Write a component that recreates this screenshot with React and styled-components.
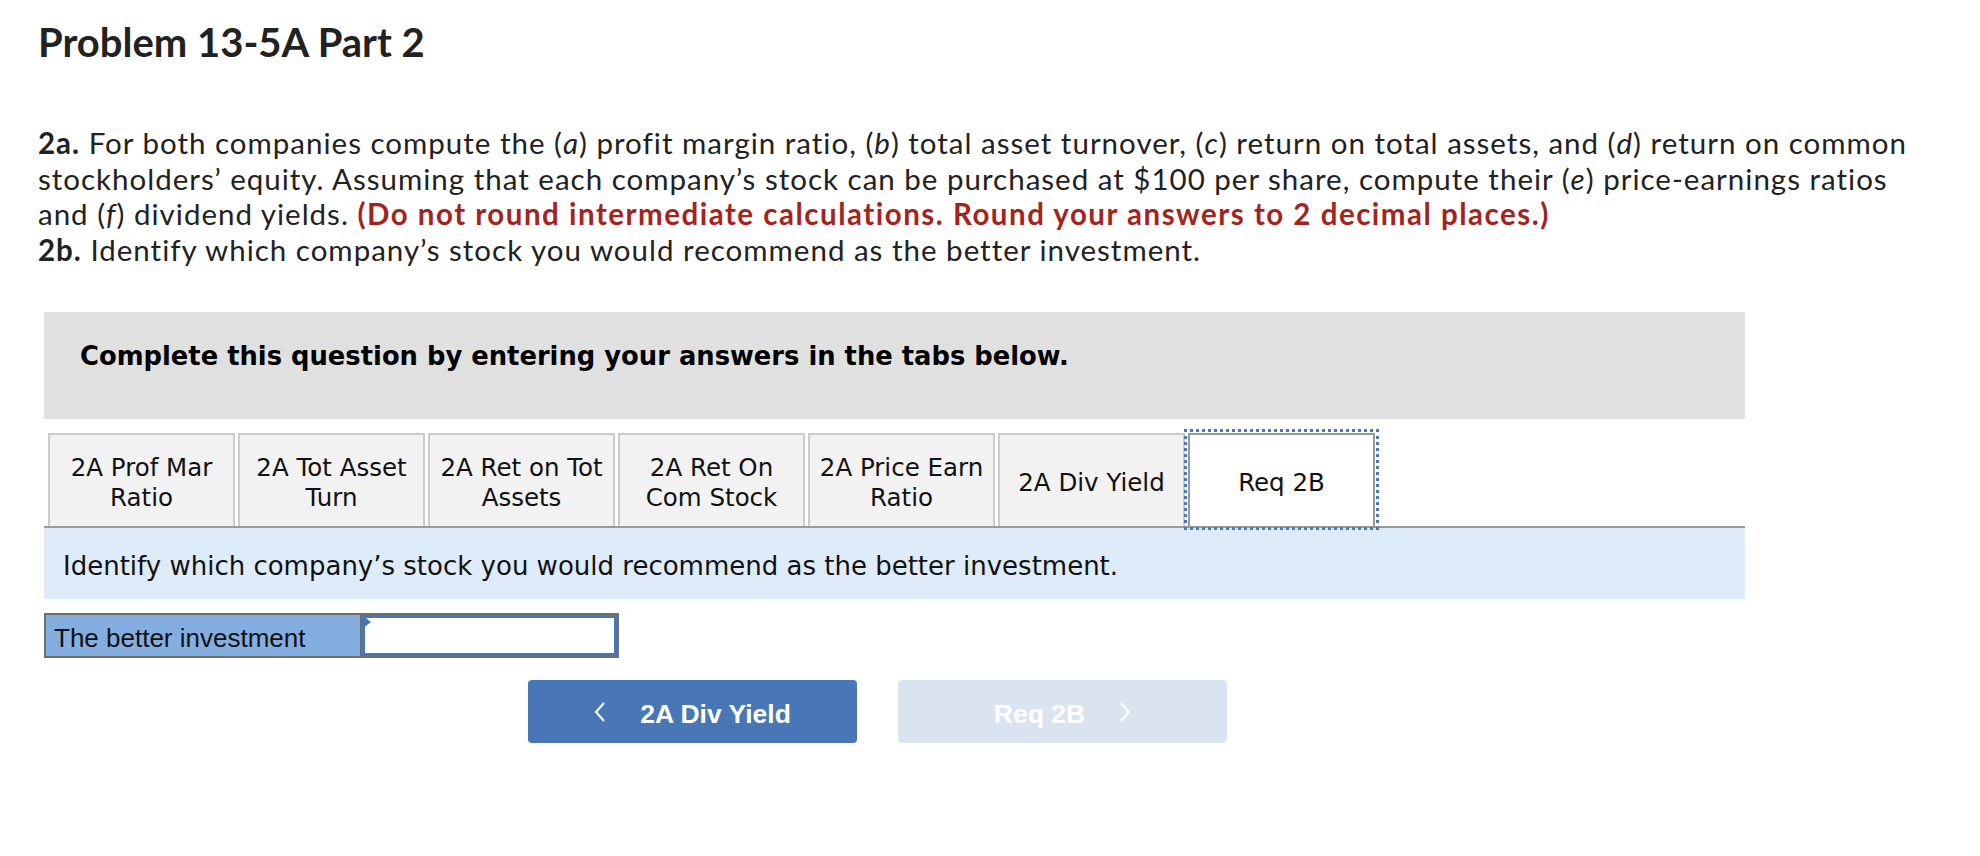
import React from 'react';
import styled, { createGlobalStyle } from 'styled-components';

const Global = createGlobalStyle`
  html, body { margin: 0; padding: 0; background: #fff; }
  body { font-family: Lato, "Noto Sans", sans-serif; color: #222; }
`;

const tabs = [
  ['2A Prof Mar', 'Ratio'],
  ['2A Tot Asset', 'Turn'],
  ['2A Ret on Tot', 'Assets'],
  ['2A Ret On', 'Com Stock'],
  ['2A Price Earn', 'Ratio'],
  ['2A Div Yield'],
  ['Req 2B'],
];

function App() {
  return (
    <Page>
      <Global />
      <Title>Problem 13-5A Part 2</Title>
      <Prompt>
        <b>2a.</b> For both companies compute the (<i>a</i>) profit margin ratio, (<i>b</i>) total asset turnover, (<i>c</i>) return on total assets, and (<i>d</i>) return on common
        <br />
        stockholders’ equity. Assuming that each company’s stock can be purchased at $100 per share, compute their (<i>e</i>) price-earnings ratios
        <br />
        and (<i>f</i>) dividend yields. <Warn>(Do not round intermediate calculations. Round your answers to 2 decimal places.)</Warn>
        <br />
        <b>2b.</b> Identify which company’s stock you would recommend as the better investment.
      </Prompt>

      <Question>
        <Banner>Complete this question by entering your answers in the tabs below.</Banner>
        <TabList>
          {tabs.map((t, i) => (
            <Tab key={i} active={i === tabs.length - 1}>
              {t.map((line, j) => (
                <span key={j}>{line}</span>
              ))}
            </Tab>
          ))}
        </TabList>
        <Instruction>Identify which company’s stock you would recommend as the better investment.</Instruction>

        <AnswerRow>
          <Label>The better investment</Label>
          <Cell>
            <Select />
          </Cell>
        </AnswerRow>

        <Nav>
          <NavButton>
            <Chevron viewBox="0 0 12 22">
              <polyline points="10,2 2,11 10,20" />
            </Chevron>
            2A Div Yield
          </NavButton>
          <NavButton disabled>
            Req 2B
            <Chevron viewBox="0 0 12 22">
              <polyline points="2,2 10,11 2,20" />
            </Chevron>
          </NavButton>
        </Nav>
      </Question>
    </Page>
  );
}

export default App;

const Page = styled.div`
  padding: 18px 0 60px 0;
`;

const Title = styled.h1`
  margin: 0 0 0 38px;
  font: 700 40px/48px Lato, "Noto Sans", sans-serif;
  color: #222;
`;

const Prompt = styled.p`
  margin: 59px 0 0 38px;
  font: 400 29.5px/35.5px Lato, "Noto Sans", sans-serif;
  letter-spacing: 1px;
  color: #222;
  white-space: nowrap;
  b { font-weight: 700; }
`;

const Warn = styled.span`
  color: #a5231d;
  font-weight: 700;
  letter-spacing: 1.5px;
`;

const Question = styled.section`
  margin: 45px 0 0 44px;
  width: 1701px;
  font-family: "DejaVu Sans", Verdana, sans-serif;
`;

const Banner = styled.div`
  box-sizing: border-box;
  height: 107px;
  padding: 29px 36px 0;
  background: #e0e0e0;
  font-weight: 700;
  font-size: 25.8px;
  line-height: 30px;
  color: #000;
`;

const TabList = styled.div`
  display: flex;
  gap: 3px;
  margin-top: 14px;
  padding-left: 4px;
  border-bottom: 2px solid #9a9a9a;
`;

const Tab = styled.div`
  box-sizing: border-box;
  width: 187px;
  height: 93px;
  padding-top: 4px;
  display: flex;
  flex-direction: column;
  align-items: center;
  justify-content: center;
  border: 2px solid ${p => (p.active ? '#999' : '#cbcbcb')};
  border-bottom: none;
  background: ${p => (p.active ? '#fff' : '#f2f2f2')};
  outline: ${p => (p.active ? '3px dotted #4a78bf' : 'none')};
  outline-offset: 1px;
  font-size: 24.5px;
  line-height: 30px;
  color: #111;
  text-align: center;
  white-space: nowrap;
`;

const Instruction = styled.div`
  box-sizing: border-box;
  height: 71px;
  padding: 5px 0 0 19px;
  display: flex;
  align-items: center;
  background: #deebf8;
  font-size: 26px;
  color: #111;
`;

const AnswerRow = styled.div`
  display: flex;
  margin-top: 14px;
  height: 45px;
`;

const Label = styled.div`
  box-sizing: border-box;
  width: 316px;
  display: flex;
  align-items: center;
  padding: 6px 0 0 8px;
  background: #84ade0;
  border: 2px solid #6e6e6e;
  border-right: none;
  font: 400 26px "Liberation Sans", Arial, sans-serif;
  color: #111;
`;

const Cell = styled.div`
  box-sizing: border-box;
  width: 259px;
  border: 2px solid #6e6e6e;
  background: #fff;
  position: relative;
`;

const Select = styled.div`
  box-sizing: border-box;
  height: 100%;
  border: 3px solid #4a76b7;
  position: relative;
  &::before {
    content: '';
    position: absolute;
    left: -3px;
    top: -3px;
    border-left: 9px solid #4a76b7;
    border-top: 7px solid transparent;
    border-bottom: 7px solid transparent;
  }
`;

const Nav = styled.div`
  display: flex;
  gap: 41px;
  margin-top: 22px;
  padding-left: 484px;
`;

const NavButton = styled.button`
  width: 329px;
  height: 63px;
  padding-top: 6px;
  display: flex;
  align-items: center;
  justify-content: center;
  gap: 34px;
  border: none;
  border-radius: 4px;
  background: ${p => (p.disabled ? '#dae4f0' : '#4876b6')};
  color: #fff;
  font: 700 26.5px "Liberation Sans", Arial, sans-serif;
  cursor: ${p => (p.disabled ? 'default' : 'pointer')};
`;

const Chevron = styled.svg`
  width: 12px;
  height: 22px;
  margin-top: -4px;
  fill: none;
  stroke: currentColor;
  stroke-width: 2;
`;
